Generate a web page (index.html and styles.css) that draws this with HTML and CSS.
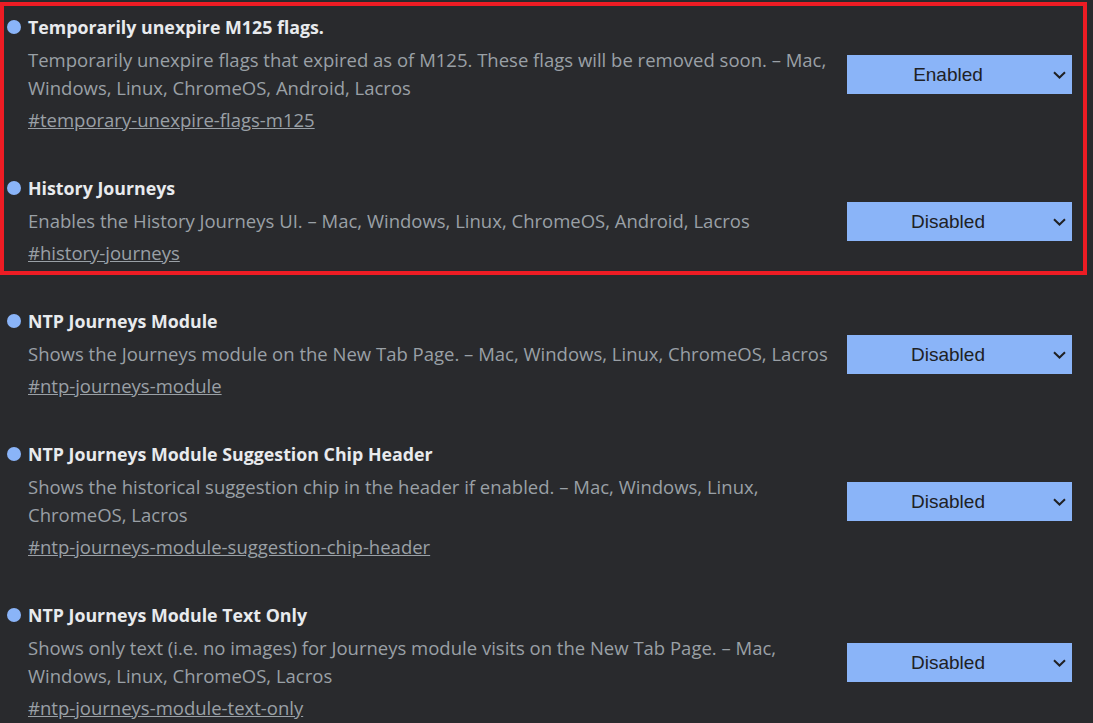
FILE: index.html
```html
<!DOCTYPE html>
<html lang="en">
<head>
<meta charset="utf-8">
<title>Experiments</title>
<link rel="stylesheet" href="styles.css">
</head>
<body>
<main class="list">
  <div class="highlight" aria-hidden="true"></div>

  <section class="experiment">
    <div class="info">
      <h3 class="title"><span class="dot"></span>Temporarily unexpire M125 flags.</h3>
      <p class="desc">Temporarily unexpire flags that expired as of M125. These flags will be removed soon. – Mac, Windows, Linux, ChromeOS, Android, Lacros</p>
      <a class="link" href="#temporary-unexpire-flags-m125">#temporary-unexpire-flags-m125</a>
    </div>
    <div class="select"><span class="select-text">Enabled</span><svg class="chev" width="13" height="8" viewBox="0 0 13 8"><path d="M1 1.2 L6.5 6.5 L12 1.2" fill="none" stroke="#202124" stroke-width="2"/></svg></div>
  </section>

  <section class="experiment">
    <div class="info">
      <h3 class="title"><span class="dot"></span>History Journeys</h3>
      <p class="desc">Enables the History Journeys UI. – Mac, Windows, Linux, ChromeOS, Android, Lacros</p>
      <a class="link" href="#history-journeys">#history-journeys</a>
    </div>
    <div class="select"><span class="select-text">Disabled</span><svg class="chev" width="13" height="8" viewBox="0 0 13 8"><path d="M1 1.2 L6.5 6.5 L12 1.2" fill="none" stroke="#202124" stroke-width="2"/></svg></div>
  </section>

  <section class="experiment">
    <div class="info">
      <h3 class="title"><span class="dot"></span>NTP Journeys Module</h3>
      <p class="desc">Shows the Journeys module on the New Tab Page. – Mac, Windows, Linux, ChromeOS, Lacros</p>
      <a class="link" href="#ntp-journeys-module">#ntp-journeys-module</a>
    </div>
    <div class="select"><span class="select-text">Disabled</span><svg class="chev" width="13" height="8" viewBox="0 0 13 8"><path d="M1 1.2 L6.5 6.5 L12 1.2" fill="none" stroke="#202124" stroke-width="2"/></svg></div>
  </section>

  <section class="experiment">
    <div class="info">
      <h3 class="title"><span class="dot"></span>NTP Journeys Module Suggestion Chip Header</h3>
      <p class="desc">Shows the historical suggestion chip in the header if enabled. – Mac, Windows, Linux, ChromeOS, Lacros</p>
      <a class="link" href="#ntp-journeys-module-suggestion-chip-header">#ntp-journeys-module-suggestion-chip-header</a>
    </div>
    <div class="select"><span class="select-text">Disabled</span><svg class="chev" width="13" height="8" viewBox="0 0 13 8"><path d="M1 1.2 L6.5 6.5 L12 1.2" fill="none" stroke="#202124" stroke-width="2"/></svg></div>
  </section>

  <section class="experiment">
    <div class="info">
      <h3 class="title"><span class="dot"></span>NTP Journeys Module Text Only</h3>
      <p class="desc">Shows only text (i.e. no images) for Journeys module visits on the New Tab Page. – Mac, Windows, Linux, ChromeOS, Lacros</p>
      <a class="link" href="#ntp-journeys-module-text-only">#ntp-journeys-module-text-only</a>
    </div>
    <div class="select"><span class="select-text">Disabled</span><svg class="chev" width="13" height="8" viewBox="0 0 13 8"><path d="M1 1.2 L6.5 6.5 L12 1.2" fill="none" stroke="#202124" stroke-width="2"/></svg></div>
  </section>
</main>
</body>
</html>
```

FILE: styles.css
```css
html, body {
  margin: 0;
  padding: 0;
  background: #292a2d;
  height: 100%;
  overflow: hidden;
}

body {
  font-family: "Open Sans", "Noto Sans", sans-serif;
}

.list {
  position: relative;
  display: flex;
  flex-direction: column;
  gap: 42px;
  padding: 15px 21px 0 0;
}

.highlight {
  position: absolute;
  left: 0;
  top: 2px;
  width: 1079px;
  height: 265px;
  border: 4px solid #ed1c24;
  pointer-events: none;
}

.experiment {
  display: flex;
  align-items: center;
  gap: 16px;
}

.info {
  flex: 1;
  min-width: 0;
  display: flex;
  flex-direction: column;
  align-items: flex-start;
  padding-left: 28px;
}

.title {
  position: relative;
  margin: 0;
  font-size: 17.8px;
  font-weight: 700;
  line-height: 24px;
  color: #e8eaed;
}

.dot {
  position: absolute;
  left: -21px;
  top: 5px;
  width: 14px;
  height: 14px;
  border-radius: 50%;
  background: #8ab4f8;
}

.desc {
  margin: 7px 0 0;
  font-size: 18.5px;
  line-height: 28px;
  color: #9aa0a6;
}

.link {
  margin-top: 4px;
  font-size: 18.5px;
  line-height: 28px;
  color: #9aa0a6;
  text-decoration: underline;
}

.select {
  flex: none;
  width: 225px;
  height: 39px;
  display: flex;
  align-items: center;
  gap: 4px;
  padding-right: 6px;
  box-sizing: border-box;
  background: #8ab4f8;
  font-family: "Liberation Sans", Arial, sans-serif;
  font-size: 19px;
  color: #202124;
}

.select-text {
  flex: 1;
  text-align: center;
}

.chev {
  flex: none;
  display: block;
}
```
